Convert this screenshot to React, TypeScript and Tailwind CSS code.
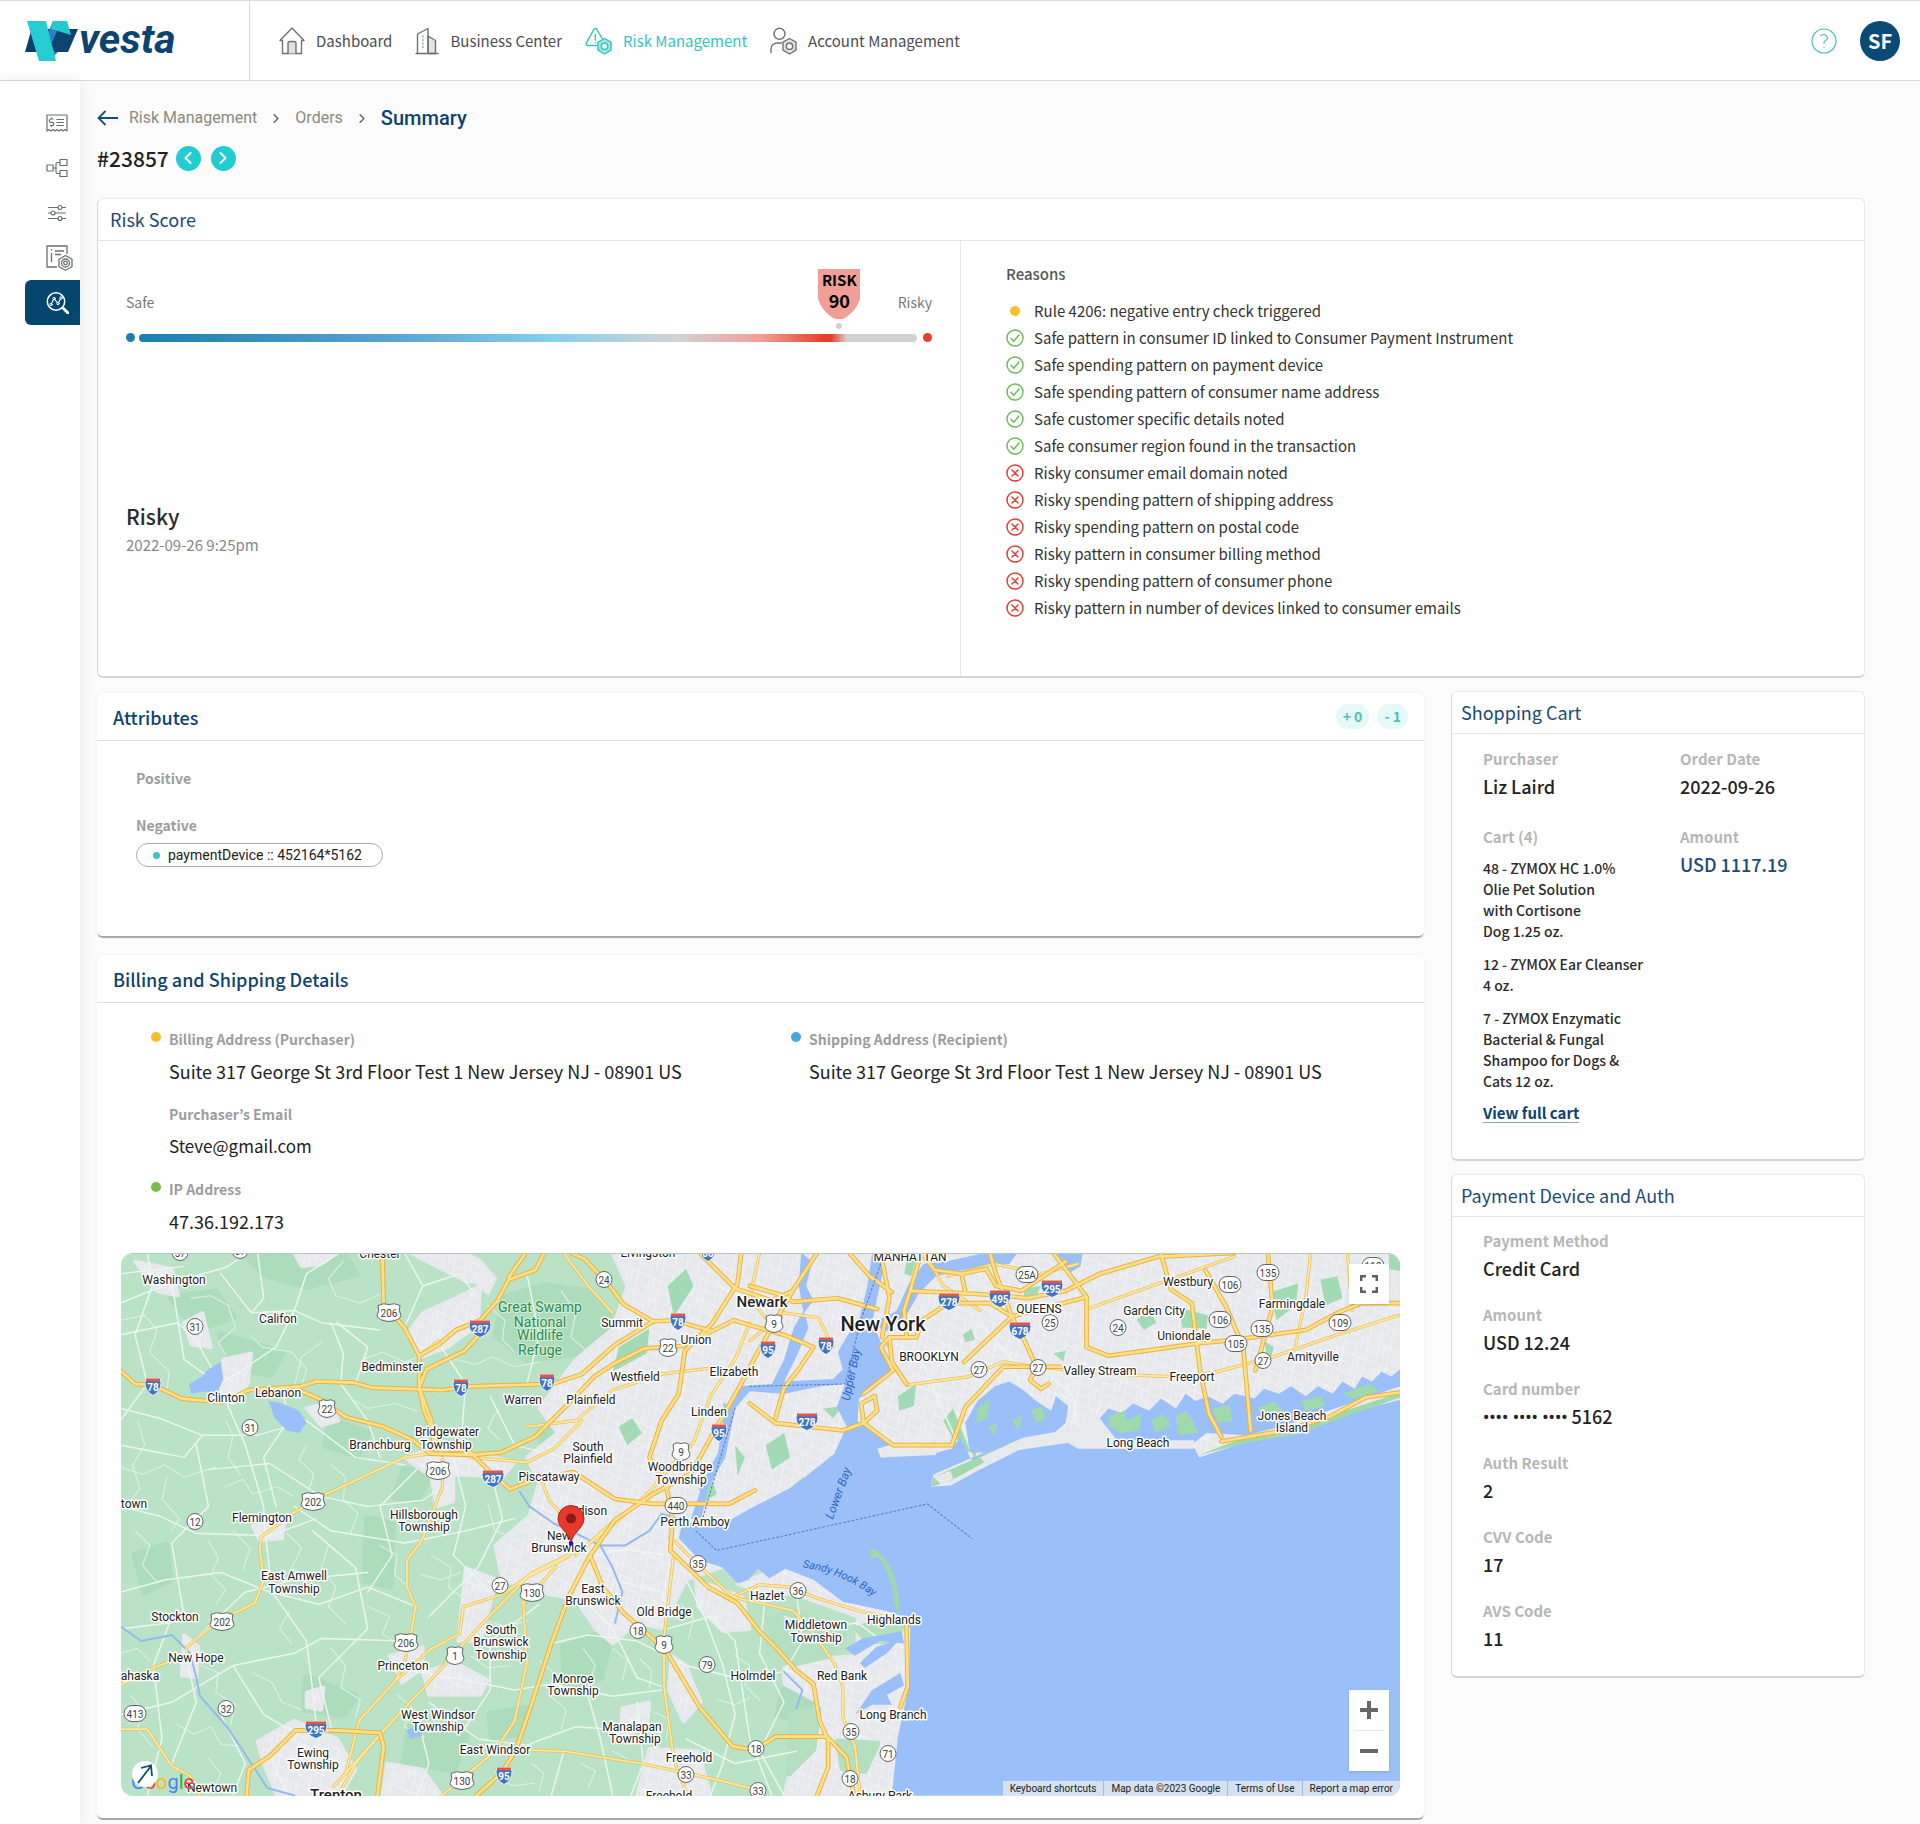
import type { ReactNode } from "react";

/* ---------- icons ---------- */

function VestaMark() {
  return (
    <svg width="54" height="40" viewBox="0 0 54 40" aria-hidden="true">
      <path d="M6 10 L0 31 H12 Z" fill="#0b3f6b" />
      <path d="M22 8 H53 L43 31 H29 L20 16 Z" fill="#0b4470" />
      <path d="M23 12 L28 0 L32 10 L27 22 Z" fill="#2c7fd0" />
      <path d="M27 31 L24 40 L33 31 Z" fill="#2c7fd0" />
      <path d="M28 0 H42 L46 14 L26 8 Z" fill="#25c9cf" />
      <path d="M2 0 H21 L31 40 H14 Z" fill="#25cdd2" />
    </svg>
  );
}

function HomeIcon() {
  return (
    <svg width="26" height="28" viewBox="0 0 26 28" fill="none" stroke="#6f7275" strokeWidth="1.4" strokeLinejoin="round" strokeLinecap="round" aria-hidden="true">
      <path d="M1 13.5 13 1 25 13.5H22.5V26.5H3.5V13.5Z" />
      <path d="M9 26.5V16.5a2 2 0 0 1 2-2h4a2 2 0 0 1 2 2v10" fill="#dfe0e4" />
    </svg>
  );
}

function BuildingIcon() {
  return (
    <svg width="24" height="28" viewBox="0 0 24 28" fill="none" stroke="#6f7275" strokeWidth="1.4" strokeLinejoin="round" strokeLinecap="round" aria-hidden="true">
      <path d="M13 9 20.5 13.5V26.5H13Z" fill="#e3e4e8" />
      <path d="M2.5 26.5V7L13 1.5V26.5" />
      <path d="M1 26.5H23" />
      <path d="M8 9v14" strokeDasharray="1 2.5" stroke="#9da0a3" />
    </svg>
  );
}

function RiskIcon() {
  return (
    <svg width="27" height="28" viewBox="0 0 27 28" fill="none" stroke="#2fc6c3" strokeWidth="1.4" strokeLinejoin="round" strokeLinecap="round" aria-hidden="true">
      <path d="M12 18.5H2.5A1.5 1.5 0 0 1 1.2 16.4L9 2.2a1.5 1.5 0 0 1 2.6 0L17.5 12" />
      <path d="M10.3 7.5v5.5M10.3 15.5v.2" />
      <path d="M19.5 11.5 26 15.2v8L19.5 27 13 23.2v-8Z" fill="#a5e5e3" />
      <circle cx="19.5" cy="19.2" r="3.2" fill="#e6faf9" />
    </svg>
  );
}

function AccountIcon() {
  return (
    <svg width="27" height="28" viewBox="0 0 27 28" fill="none" stroke="#6f7275" strokeWidth="1.4" strokeLinejoin="round" strokeLinecap="round" aria-hidden="true">
      <circle cx="9.5" cy="6.8" r="5.5" />
      <path d="M1 25.5V22a6 6 0 0 1 6-6h4.5" />
      <path d="M19.5 11.5 26 15.2v8L19.5 27 13 23.2v-8Z" fill="#e3e4e8" />
      <circle cx="19.5" cy="19.2" r="3.2" fill="#fff" />
    </svg>
  );
}

function ReceiptIcon() {
  return (
    <svg width="22" height="20" viewBox="0 0 22 20" fill="none" stroke="#6b6e71" strokeWidth="1.2" strokeLinejoin="round" aria-hidden="true">
      <path d="M1 18V2H21V18l-2-1.5-2 1.5-2-1.5-2 1.5-2-1.5-2 1.5-2-1.5-2 1.5-2-1.5Z" />
      <path d="M7.5 6H5a1.4 1.4 0 0 0 0 3.3h1.2a1.4 1.4 0 0 1 0 3.2H3.8M5.6 4.5V6M5.6 12.5V14M10.5 6.5H18M10.5 9.5H18M10.5 12.5H18" />
    </svg>
  );
}

function FlowIcon() {
  return (
    <svg width="22" height="20" viewBox="0 0 22 20" fill="none" stroke="#6b6e71" strokeWidth="1.2" strokeLinejoin="round" aria-hidden="true">
      <rect x="1" y="7" width="6" height="6" />
      <rect x="14" y="1.5" width="7" height="6" />
      <rect x="14" y="12.5" width="7" height="6" />
      <path d="M7 10h3M14 4.5h-2.5a1.5 1.5 0 0 0-1.5 1.5v8a1.5 1.5 0 0 0 1.5 1.5H14" />
    </svg>
  );
}

function SlidersIcon() {
  return (
    <svg width="22" height="18" viewBox="0 0 22 18" fill="none" stroke="#6b6e71" strokeWidth="1.2" aria-hidden="true">
      <path d="M2 3.5h10M16 3.5h4M2 9h3M9 9h11M2 14.5h10M16 14.5h4" />
      <circle cx="14" cy="3.5" r="2" />
      <circle cx="7" cy="9" r="2" />
      <circle cx="14" cy="14.5" r="2" />
    </svg>
  );
}

function ReportIcon() {
  return (
    <svg width="27" height="26" viewBox="0 0 27 26" fill="none" stroke="#6b6e71" strokeWidth="1.3" strokeLinejoin="round" aria-hidden="true">
      <path d="M11 22H1V1H21V9" />
      <path d="M5.5 4v1.5M5.5 8v9M9 6h9M9 9.5h6" />
      <path d="M19.5 10.5 26 14.2v7.5L19.5 25.3 13 21.7v-7.5Z" fill="#fff" />
      <circle cx="19.5" cy="18" r="4" />
      <circle cx="19.5" cy="18" r="1.8" />
    </svg>
  );
}

function AnalyzeIcon() {
  return (
    <svg width="23" height="22" viewBox="0 0 23 22" fill="none" stroke="#fff" strokeWidth="1.5" strokeLinecap="round" aria-hidden="true">
      <circle cx="10" cy="9.5" r="8.7" />
      <path d="m17 16 5 5" strokeWidth="2.8" />
      <path d="m5 12.5 3-6 4 5L15 6" strokeWidth="1.2" />
      <circle cx="5" cy="12.5" r="1.2" fill="#05466f" strokeWidth="1" />
      <circle cx="8" cy="6.5" r="1.2" fill="#05466f" strokeWidth="1" />
      <circle cx="12" cy="11.5" r="1.2" fill="#05466f" strokeWidth="1" />
      <circle cx="15" cy="6" r="1.2" fill="#05466f" strokeWidth="1" />
    </svg>
  );
}

function Chevron({ dir, className }: { dir: "left" | "right"; className: string }) {
  return (
    <svg viewBox="0 0 8 12" className={className} fill="none" stroke="currentColor" strokeWidth="2" strokeLinecap="round" strokeLinejoin="round" aria-hidden="true">
      <path d={dir === "left" ? "M6.5 1 1.5 6l5 5" : "M1.5 1l5 5-5 5"} />
    </svg>
  );
}

function SafeIcon() {
  return (
    <svg width="18" height="18" viewBox="0 0 18 18" fill="none" stroke="#6cb955" strokeWidth="1.4" strokeLinecap="round" strokeLinejoin="round" aria-hidden="true">
      <circle cx="9" cy="9" r="8" />
      <path d="m5 9.3 2.8 3L13 6" />
    </svg>
  );
}

function RiskyIcon() {
  return (
    <svg width="18" height="18" viewBox="0 0 18 18" fill="none" stroke="#df4035" strokeWidth="1.5" strokeLinecap="round" aria-hidden="true">
      <circle cx="9" cy="9" r="8" />
      <path d="m6 6 6 6M12 6l-6 6" />
    </svg>
  );
}

/* ---------- shared pieces ---------- */

function Card({ title, children, inset = "px-[9px]" }: { title: string; children: ReactNode; inset?: string }) {
  return (
    <section className="rounded-md border border-b-2 border-[#e9e9e9] border-b-[#d4d4d4] border-l-[#d9d9d9] bg-white">
      <h2 className={`h-[42px] border-b border-[#e4e6e7] text-[18px] leading-[41px] text-[#1b4a75] ${inset}`}>{title}</h2>
      {children}
    </section>
  );
}

function Panel({ title, extra, children }: { title: string; extra?: ReactNode; children: ReactNode }) {
  return (
    <section className="rounded-md border-b-2 border-[#a9a9ab] bg-white shadow-[0_0_3px_rgba(0,0,0,0.05)]">
      <div className="flex h-12 items-center justify-between border-b border-[#dcdddf] px-4">
        <h2 className="text-[18px] leading-6 font-medium text-[#0b4370]">{title}</h2>
        {extra}
      </div>
      {children}
    </section>
  );
}

function Field({ label, value, tone = "text-[#222]" }: { label: string; value: ReactNode; tone?: string }) {
  return (
    <div>
      <dt className="text-[15px] leading-6 font-bold text-[#b5b7b7]">{label}</dt>
      <dd className={`mt-px h-7 text-[18px] leading-7 font-medium ${tone}`}>{value}</dd>
    </div>
  );
}

function Address({ label, value, dot, size = "text-[18px]" }: { label: string; value: string; dot?: string; size?: string }) {
  return (
    <div className="relative pl-12">
      {dot && <span className={`absolute top-[5px] left-[30px] size-[10px] rounded-full ${dot}`} />}
      <dt className="text-[14px] leading-6 font-bold text-[#9a9d9f]">{label}</dt>
      <dd className={`mt-[6px] leading-7 text-[#222] ${size}`}>{value}</dd>
    </div>
  );
}

/* ---------- map ---------- */

const UNIT = 1.2245;
const mx = (x: number) => Math.round((x - 98.5) * UNIT);
const my = (y: number) => Math.round((y - 1023.5) * UNIT);

const highways = [
  "M98 1119 110 1130 125 1131 148 1142 181 1145 203 1135 245 1132 258 1128 289 1129 303 1133 361 1135 385 1132 451 1130 475 1122 502 1098 533 1079 550 1078 581 1087 599 1078 612 1082 640 1090 664 1100 652 1118 640 1133 633 1158",
  "M246 1136 262 1143 282 1157 313 1165 337 1176 351 1187 386 1188 409 1186 437 1173 464 1146 485 1124 502 1113 526 1101 557 1099 581 1087",
  "M444 1023 437 1037 415 1045 406 1062 392 1078 392 1089 379 1103 348 1118 342 1133 346 1152 354 1171 353 1183 382 1184 399 1201 416 1216 434 1209 468 1202 502 1224 533 1228 595 1228 616 1217",
  "M429 1023 415 1043M392 1078 372 1086 358 1098 342 1107",
  "M312 1026 313 1065 330 1084 342 1107 342 1133 352 1160 356 1184",
  "M389 1466 409 1448 421 1429 433 1394 450 1342 464 1304 481 1271 502 1241 533 1220 564 1203 585 1165 605 1130 619 1103 647 1054 667 1023",
  "M605 1023 602 1048 581 1081 559 1103 554 1138 540 1160 530 1190 544 1214 549 1241 547 1266 578 1296 602 1309 619 1331 633 1345 650 1364 664 1375 669 1405 676 1421 676 1443 667 1466",
  "M676 1419 691 1435 697 1466",
  "M482 1271 492 1296 509 1317 543 1347 571 1394 598 1426 616 1429 633 1418 674 1418",
  "M201 1466 203 1445 220 1434 241 1413 275 1413 310 1415 313 1426 308 1466",
  "M466 1023 477 1028 496 1048 509 1065 533 1079",
  "M612 1146 633 1162 688 1168 705 1162 729 1180 777 1180 788 1149 819 1116 867 1116",
  "M705 1162 703 1146 714 1140 716 1152 705 1162M705 1138 729 1119 719 1100 726 1092 748 1092 753 1078 774 1064 808 1064 826 1075 887 1059",
  "M743 1054 788 1056 819 1058 839 1060 870 1054 898 1040 946 1026 1008 1023",
  "M808 1023 813 1040 826 1075 836 1094 846 1116 841 1127 850 1134 856 1130",
  "M860 1023 887 1059 887 1100 905 1107 942 1102 977 1097 1008 1094 1066 1086 1094 1071 1112 1064 1142 1064",
  "M948 1024 956 1053 973 1064 980 1121 987 1154 997 1173",
  "M984 1037 1001 1067 1015 1100 1021 1168",
  "M1035 1023 1039 1067 1025 1119",
  "M740 1130 728 1112 726 1092M787 1112 805 1095 826 1075",
  "M1142 1137 1115 1141 1085 1157 1049 1168 997 1177",
  "M612 1050 640 1058 647 1063 684 1060 716 1069M694 1024 710 1042 728 1055",
  "M719 1023 726 1060 720 1092M752 1023 743 1054 738 1070 740 1090",
  "M752 1023 763 1037 785 1040 788 1056M785 1040 805 1036 813 1050 834 1054 870 1030",
  "M740 1328 741 1377 735 1394",
  "M572 1024 600 1052 630 1062 647 1054",
];

const routes = [
  "M342 1107 358 1095M361 1190 361 1214 344 1258 332 1274 332 1296 339 1312 336 1331 330 1358 323 1372",
  "M351 1187 330 1190 262 1222 238 1236 213 1255 212 1266 215 1290 208 1309 179 1323 152 1345 152 1352 127 1361 98 1376",
  "M505 1241 479 1262 433 1285 399 1320 371 1350 344 1380 313 1413 272 1459",
  "M505 1241 530 1218 545 1200 566 1178 580 1140 600 1110 612 1080",
  "M550 1268 542 1337 542 1377 550 1437 561 1466",
  "M430 1429 461 1430 523 1440 561 1448 588 1454 619 1462",
  "M454 1279 427 1309 430 1358 420 1405 404 1430 382 1448 361 1466",
  "M464 1271 430 1288 410 1302 378 1312 375 1334 351 1347 323 1372 293 1405 282 1448",
  "M547 1255 571 1279 598 1304 647 1315 661 1330 681 1358 688 1377 688 1402 698 1426 702 1466",
  "M598 1304 620 1294 645 1296 667 1305 700 1315 722 1320 738 1325",
  "M740 1131 791 1124 819 1112 846 1116 905 1122 956 1124 990 1121 1039 1108 1094 1089 1142 1074",
  "M887 1069 946 1048 1008 1026",
  "M1070 1023 1066 1060 1058 1098M1100 1023 1104 1070",
  "M460 1023 480 1050 500 1072M430 1165 470 1160 500 1135 540 1122 580 1117",
  "M384 1190 430 1194 452 1183 475 1160",
  "M98 1412 120 1412 140 1442 155 1450 163 1466M313 1413 290 1440 276 1466",
  "M612 1095 640 1072 668 1076 680 1100M620 1023 612 1060 632 1085",
  "M440 1203 448 1225 462 1240 466 1260M502 1241 470 1270",
  "M755 1023 770 1050 800 1070M774 1042 812 1032 850 1040 880 1032",
];

const locals = [
  "M98 1064 140 1047 184 1035 200 1024M140 1047 150 1110 178 1130 200 1180 215 1230 216 1250 222 1300 250 1340 255 1380 258 1410",
  "M98 1230 130 1238 160 1252 220 1254 258 1240M98 1090 145 1080 160 1095 180 1130",
  "M180 1040 205 1072 240 1070 262 1080 310 1086M240 1070 225 1100 180 1130M240 1070 250 1040 275 1024",
  "M98 1150 130 1158 165 1172 210 1172 250 1160 290 1190 330 1196",
  "M120 1023 124 1050 110 1090 120 1130 98 1160M270 1080 280 1105 278 1130 300 1160 310 1190",
  "M98 1300 135 1290 180 1284 220 1300 260 1310 300 1296 340 1312",
  "M140 1320 125 1360 132 1420 120 1466M150 1345 160 1390 140 1440M152 1345 200 1300 240 1290 300 1284",
  "M98 1400 140 1390 190 1360 240 1350 262 1338 330 1340M190 1360 215 1400 250 1420",
  "M255 1250 290 1280 300 1330 260 1370 270 1410M240 1230 270 1250 330 1260 380 1250 420 1240",
  "M370 1190 380 1230 370 1270 400 1300M400 1200 410 1240 390 1280 350 1320",
  "M360 1100 380 1130 376 1180M400 1140 420 1180 460 1190M430 1040 440 1090 430 1130",
  "M340 1365 380 1372 420 1380 450 1375 500 1385 540 1380M350 1390 390 1420 430 1425 470 1410 540 1415",
  "M470 1300 500 1330 520 1370 540 1377M450 1342 480 1335 520 1340 560 1360 600 1370 640 1365",
  "M560 1290 575 1320 590 1360 600 1400 590 1440 580 1466M545 1330 580 1320 600 1340 612 1420 630 1466",
  "M480 1385 490 1420 500 1466M460 1430 450 1466M520 1390 525 1440 515 1466M560 1420 600 1440 650 1430",
  "M625 1300 620 1350 640 1390 620 1430 640 1466M640 1320 670 1330 700 1325 720 1340M650 1300 655 1340 640 1365",
  "M210 1023 215 1060 205 1072M330 1023 345 1050 330 1084M345 1050 375 1040 390 1060",
  "M160 1180 170 1230 140 1260 150 1320M170 1200 220 1195 262 1222M290 1130 300 1100 275 1080",
  "M98 1040 150 1034M98 1180 150 1190 165 1172M230 1132 235 1160 215 1190 225 1230",
  "M340 1200 310 1230 320 1270 300 1300M262 1222 300 1230 345 1225 361 1214",
  "M98 1330 140 1325M180 1400 200 1440 190 1466M220 1434 235 1466M340 1400 350 1440 340 1466",
  "M440 1310 400 1340 400 1380 380 1410M480 1271 510 1265 545 1270M500 1290 540 1300 547 1320",
  "M832 1176 838 1150 826 1110 800 1080M880 1170 876 1140 850 1116M788 1192 760 1130 750 1105",
];

const lanes = [
  "M98 1078 118 1074 128 1086 122 1104 138 1120 136 1134M156 1060 172 1058 186 1066 192 1084 178 1096 184 1106M204 1090 214 1100 238 1104 250 1118 246 1132",
  "M280 1030 268 1044 274 1058 294 1064 312 1056M262 1096 246 1108 240 1132M296 1110 312 1104 330 1112 342 1108M290 1144 300 1150 322 1146 340 1152",
  "M98 1198 116 1204 134 1196 150 1206 176 1198M112 1160 118 1180 108 1196 114 1216 104 1228M136 1206 132 1224 146 1240 140 1250",
  "M184 1214 198 1208 206 1220 226 1214 240 1222M184 1160 190 1172 186 1190 196 1204M250 1180 244 1192 256 1204 252 1216M270 1196 282 1206 280 1224 292 1236 286 1252",
  "M110 1250 122 1262 116 1278 128 1292M170 1258 178 1272 172 1286 184 1298 176 1310M190 1250 204 1264 198 1282M234 1252 246 1264 238 1280 250 1290",
  "M268 1262 262 1280 274 1296 268 1312 282 1326M310 1262 324 1270 322 1286 334 1296M300 1312 318 1320 312 1334 330 1346M236 1316 228 1330 238 1342",
  "M98 1350 112 1346 122 1356M164 1360 178 1366 176 1382 192 1392 188 1408M206 1366 222 1374 230 1390 246 1396M270 1346 282 1360 278 1378 294 1388 290 1402",
  "M106 1384 116 1396 112 1412 124 1426M144 1408 158 1416 172 1410 180 1424 196 1426M170 1436 180 1448 174 1462M324 1384 336 1394 330 1410 346 1418",
  "M398 1228 404 1250 422 1256 440 1250M352 1270 368 1280 366 1296 380 1306M344 1286 360 1290 376 1284M406 1152 398 1166 408 1176",
  "M372 1110 388 1114 402 1108 420 1116 440 1112M398 1066 412 1078 410 1094 420 1104M458 1054 470 1072 466 1092 480 1104",
  "M394 1322 412 1328 430 1324M384 1352 398 1362 416 1360M440 1356 452 1366 448 1384 462 1396 458 1412M476 1346 486 1360 480 1376",
  "M500 1346 512 1356 508 1372M522 1354 532 1364 530 1378M556 1310 566 1322 562 1338M600 1352 612 1360 608 1376 620 1388M586 1388 600 1392 612 1386",
  "M434 1440 444 1448 440 1462M474 1440 486 1446 480 1460M400 1452 420 1458 436 1456M500 1430 512 1436M534 1398 546 1404 544 1420",
];

const parks = [
  "M444 1050 480 1055 500 1080 470 1105 430 1110 405 1090 412 1060Z",
  "M200 1023 280 1023 290 1040 250 1050 215 1040Z",
  "M300 1240 320 1245 318 1295 298 1290Z",
  "M330 1200 350 1205 340 1225 322 1222Z",
  "M335 1410 380 1418 370 1445 330 1438Z",
  "M460 1345 500 1330 490 1370 462 1380Z",
  "M140 1060 175 1055 190 1075 160 1085Z",
  "M180 1090 230 1105 220 1122 190 1115Z",
  "M110 1270 135 1262 138 1290 118 1300Z",
  "M440 1170 460 1160 470 1180 450 1192Z",
  "M270 1160 300 1170 292 1188 266 1180Z",
  "M400 1400 430 1395 424 1415 402 1418Z",
  "M640 1380 665 1385 660 1405 635 1400Z",
  "M250 1370 290 1385 280 1400 248 1395Z",
];

const cityParks = [
  "M505 1165 516 1158 524 1170 512 1180Z", "M545 1050 560 1036 566 1050 550 1075Z", "M505 1100 530 1085 528 1105 500 1120Z",
  "M963 1068 986 1074 985 1085 965 1084Z", "M1038 1055 1060 1048 1058 1066 1042 1078Z", "M1078 1045 1092 1042 1096 1060 1082 1066Z",
  "M733 1140 748 1130 746 1148 734 1152Z", "M770 1160 778 1150 792 1185 785 1188Z", "M625 1180 640 1170 645 1190 630 1200Z",
  "M641 1218 656 1206 652 1220 640 1230Z", "M786 1090 793 1085 796 1094 788 1096Z", "M790 1178 796 1160 797 1195Z",
  "M1032 1095 1040 1100 1036 1115Z", "M590 1145 598 1150 592 1160Z", "M836 1052 850 1050 846 1058 836 1060Z",
  "M740 1030 748 1028 744 1042 738 1040Z", "M928 1078 938 1068 944 1080 934 1086Z", "M1134 1023 1143 1023 1143 1038 1134 1036Z",
  "M722 1094 728 1090 726 1104Z", "M672 1150 688 1148 680 1158Z", "M860 1105 870 1103 868 1112Z", "M455 1235 468 1240 460 1255Z",
  "M570 1215 580 1205 585 1220 575 1226Z", "M600 1180 608 1190 602 1205Z",
];

const urban = [
  "M500 1023 H1143 V1140 L1090 1200 700 1240 560 1290 540 1330 520 1325 500 1342 486 1330 470 1306 440 1300 410 1290 404 1262 432 1238 440 1210 430 1190 455 1170 440 1150 470 1110 500 1085 512 1050 Z",
  "M345 1072 372 1060 392 1050 390 1082 365 1100 344 1108 332 1090 Z",
  "M362 1023 382 1040 398 1056 404 1044 392 1030 380 1023Z",
  "M150 1080 165 1072 172 1100 156 1098 Z",
  "M182 1110 205 1105 202 1130 190 1146 180 1138 Z",
  "M330 1190 350 1184 395 1188 420 1194 410 1206 370 1204 370 1226 356 1230 352 1206 Z",
  "M380 1280 405 1290 392 1340 374 1340 Z",
  "M210 1422 240 1405 275 1420 290 1445 278 1466 226 1466 215 1440 Z",
  "M316 1440 345 1445 360 1466 312 1466 Z",
  "M345 1365 372 1358 398 1372 392 1384 350 1384 Z",
  "M568 1290 606 1304 612 1330 590 1332 570 1312Z",
  "M602 1293 640 1280 745 1318 745 1466 640 1466 652 1420 668 1390 640 1375 640 1362 660 1355 700 1352 700 1320 650 1302 620 1300Z",
  "M548 1352 560 1360 572 1390 558 1406 546 1380Z",
  "M508 1395 530 1390 528 1412 506 1416Z",
  "M530 1428 570 1430 580 1466 520 1466Z",
  "M318 1352 345 1345 345 1362 328 1374Z",
  "M250 1382 264 1378 262 1396 250 1394Z",
  "M150 1335 162 1345 160 1370 148 1368Z",
  "M250 1150 270 1145 276 1160 262 1164Z",
  "M240 1023 275 1023 262 1032 246 1034Z",
  "M335 1023 375 1023 400 1048 380 1046 360 1036Z",
  "M206 1246 232 1243 230 1256 212 1258Z",
  "M110 1030 140 1036 145 1058 128 1054Z",
];

const shoreGreens = [
  "M628 1322 650 1316 672 1326 690 1332 676 1352 650 1358 634 1344Z",
  "M700 1330 722 1322 736 1328 730 1340 708 1340Z",
  "M684 1422 716 1424 706 1446 688 1444Z",
  "M646 1400 668 1396 664 1428 644 1448Z",
];

const waters = [
  "M1143 1143 1112 1151 1060 1170 1018 1177 979 1190 975 1182 880 1182 872 1178 832 1184 800 1200 776 1213 760 1214 762 1204 794 1190 832 1174 795 1196 784 1174 777 1183 765 1186 719 1190 716 1183 729 1179 706 1163 698 1160 691 1165 681 1187 647 1214 612 1232 591 1244 572 1240 556 1247 554 1256 571 1274 590 1280 602 1293 611 1290 619 1281 628 1289 641 1281 664 1290 688 1308 722 1315 738 1320 743 1330 742 1377 733 1418 728 1466 H1143Z",
  "M792 1186 788 1162 798 1144 812 1132 824 1128 834 1134 846 1144 858 1152 862 1140 872 1148 870 1162 858 1172 832 1176 810 1186Z",
  "M1143 1118 1136 1124 1128 1120 1120 1128 1112 1124 1106 1134 1096 1128 1088 1138 1076 1132 1066 1140 1054 1132 1044 1138 1032 1134 1024 1142 1008 1138 998 1146 986 1140 976 1144 968 1138 960 1150 948 1142 938 1152 925 1146 916 1154 905 1150 896 1160 912 1178 975 1178 985 1170 1018 1172 1049 1164 1090 1150 1143 1132Z",
  "M712 1023 H724 L716 1060 712 1080 720 1098 728 1119 714 1134 701 1142 700 1162 692 1166 683 1149 690 1130 670 1132 640 1138 612 1136 600 1150 592 1190 578 1215 572 1242 564 1240 574 1210 586 1186 592 1148 604 1132 630 1130 640 1110 648 1084 656 1070 660 1084 650 1108 640 1128 680 1126 688 1118 684 1104 692 1090 702 1075 708 1050Z",
  "M714 1080 732 1070 742 1048 754 1032 772 1030 800 1024 H830 L824 1032 805 1034 780 1038 764 1042 750 1056 740 1074 722 1088Z",
  "M862 1023 H884 L882 1034 872 1040 864 1032Z",
  "M654 1023 663 1030 658 1050 664 1062 656 1072 652 1050Z",
  "M154 1130 165 1124 170 1118 180 1112 182 1126 176 1140 168 1136 156 1138Z",
  "M219 1144 230 1146 244 1152 250 1162 244 1170 234 1168 224 1158Z",
  "M702 1358 715 1345 735 1338 724 1350 706 1362 Z",
  "M698 1400 712 1380 735 1366 738 1376 724 1384 728 1392 712 1392Z",
  "M690 1346 704 1338 736 1332 738 1342 718 1340 698 1352Z",
  "M332 1412 346 1408 344 1418 334 1420Z",
];

const streams = [
  "M98 1328 115 1340 140 1335 155 1350 160 1370 163 1385 185 1410 205 1440 218 1460 240 1466",
  "M424 1218 432 1230 452 1244 466 1250 490 1262 510 1262 530 1250 540 1236 560 1242",
  "M490 1262 500 1280 508 1300 502 1325M640 1365 655 1380 650 1395",
];

const labels: [string, number, number][] = [
  ["Washington", 142, 1048], ["Califon", 227, 1080], ["Bedminster", 320, 1119], ["Summit", 508, 1083],
  ["Union", 568, 1097], ["Elizabeth", 599, 1123], ["Westfield", 518, 1127], ["Warren", 427, 1146],
  ["Plainfield", 482, 1146], ["Linden", 579, 1156], ["Clinton", 184, 1144], ["Lebanon", 227, 1140],
  ["Bridgewater", 365, 1172], ["Township", 364, 1183], ["Branchburg", 310, 1183], ["South", 480, 1184],
  ["Plainfield", 480, 1194], ["Woodbridge", 555, 1201], ["Township", 556, 1211], ["Piscataway", 448, 1209],
  ["Edison", 481, 1237], ["Perth Amboy", 567, 1246], ["New", 456, 1257], ["Brunswick", 456, 1267],
  ["Hillsborough", 346, 1240], ["Township", 346, 1250], ["Flemington", 214, 1242], ["town", 109, 1231],
  ["East Amwell", 240, 1290], ["Township", 240, 1300], ["Stockton", 143, 1323], ["New Hope", 160, 1357],
  ["ahaska", 114, 1371], ["Princeton", 329, 1363], ["South", 409, 1334], ["Brunswick", 409, 1344],
  ["Township", 409, 1354], ["East", 484, 1300], ["Brunswick", 484, 1310], ["Old Bridge", 542, 1319],
  ["Monroe", 468, 1374], ["Township", 468, 1384], ["West Windsor", 357, 1403], ["Township", 357, 1413],
  ["East Windsor", 404, 1432], ["Manalapan", 516, 1413], ["Township", 518, 1423], ["Freehold", 562, 1438],
  ["Ewing", 255, 1434], ["Township", 255, 1444], ["Newtown", 173, 1463], ["Holmdel", 615, 1371],
  ["Hazlet", 626, 1306], ["Middletown", 666, 1330], ["Township", 666, 1340], ["Highlands", 730, 1326],
  ["Red Bank", 687, 1371], ["Long Branch", 729, 1403], ["Westbury", 970, 1050], ["Garden City", 942, 1073],
  ["Farmingdale", 1055, 1068], ["Uniondale", 967, 1094], ["Amityville", 1072, 1111], ["Freeport", 973, 1127],
  ["Valley Stream", 898, 1122], ["Long Beach", 929, 1181], ["Jones Beach", 1055, 1159], ["Island", 1055, 1169],
  ["Chester", 310, 1027], ["Livingston", 529, 1026], ["Freehold", 546, 1469], ["Asbury Park", 718, 1469],
];

const shields: ["i" | "u" | "s", string, number, number][] = [
  ["i", "78", 125, 1132], ["i", "287", 392, 1085], ["i", "78", 376, 1133], ["i", "78", 446, 1129], ["i", "78", 553, 1079],
  ["i", "287", 402, 1207], ["i", "95", 587, 1170], ["i", "95", 627, 1102], ["i", "78", 674, 1099], ["i", "278", 775, 1063],
  ["i", "495", 816, 1060], ["i", "295", 859, 1052], ["i", "678", 833, 1086], ["i", "278", 659, 1161], ["i", "295", 258, 1412],
  ["i", "95", 411, 1450], ["i", "80", 578, 1023],
  ["u", "206", 317, 1072], ["u", "22", 545, 1100], ["u", "22", 267, 1150], ["u", "206", 357, 1201], ["u", "202", 255, 1226],
  ["u", "9", 556, 1185], ["u", "9", 632, 1081], ["u", "130", 434, 1300], ["u", "202", 181, 1324], ["u", "206", 331, 1341],
  ["u", "1", 371, 1352], ["u", "9", 542, 1343], ["u", "130", 377, 1454],
  ["s", "31", 159, 1083], ["s", "24", 493, 1045], ["s", "31", 204, 1166], ["s", "12", 159, 1242], ["s", "440", 552, 1229],
  ["s", "27", 408, 1295], ["s", "35", 570, 1277], ["s", "18", 521, 1331], ["s", "79", 577, 1359], ["s", "413", 110, 1399],
  ["s", "32", 184, 1395], ["s", "18", 617, 1428], ["s", "33", 560, 1449], ["s", "33", 619, 1462], ["s", "36", 651, 1299],
  ["s", "35", 695, 1414], ["s", "71", 725, 1432], ["s", "18", 694, 1452], ["s", "25A", 838, 1041], ["s", "25", 857, 1080],
  ["s", "24", 913, 1084], ["s", "27", 799, 1118], ["s", "27", 847, 1117], ["s", "106", 1004, 1049], ["s", "135", 1035, 1039],
  ["s", "106", 996, 1077], ["s", "135", 1030, 1085], ["s", "105", 1009, 1097], ["s", "27", 1031, 1111], ["s", "109", 1094, 1080],
  ["s", "57", 147, 1023], ["s", "57", 196, 1021], ["s", "110", 1121, 1033],
];

function Shield({ kind, text, x, y }: { kind: "i" | "u" | "s"; text: string; x: number; y: number }) {
  const w = text.length > 2 ? 11 : 8;
  return (
    <g transform={`translate(${mx(x)} ${my(y)})`}>
      {kind === "i" && (
        <>
          <path d={`M${-w + 1} -8H${w - 1}L${w} -4Q${w} 5 0 9Q${-w} 5 ${-w} -4Z`} fill="#3f74c4" stroke="#fff" strokeWidth="0.8" />
          <path d={`M${-w + 1} -8H${w - 1}V-5H${-w + 1}Z`} fill="#d8594f" />
        </>
      )}
      {kind === "u" && (
        <path d={`M${-w} -7Q${-w / 2} -10 0 -8Q${w / 2} -10 ${w} -7Q${w - 2} -2 ${w + 1} 3Q${w} 8 0 9Q${-w} 8 ${-w - 1} 3Q${-w + 2} -2 ${-w} -7Z`} fill="#fff" stroke="#5f6368" />
      )}
      {kind === "s" && <rect x={-w} y="-8" width={w * 2} height="16" rx="8" fill="#fff" stroke="#5f6368" />}
      <text y="4" textAnchor="middle" fontSize="10" fontWeight={kind === "i" ? 700 : 400} fill={kind === "i" ? "#fff" : "#3c4043"}>
        {text}
      </text>
    </g>
  );
}

function AreaMap() {
  return (
    <svg viewBox="0 0 1279 543" preserveAspectRatio="xMidYMid slice" className="block h-[542px] w-full font-[Roboto,sans-serif]" role="img" aria-label="Map of New Jersey and New York">
      <defs>
        <pattern id="streets" width="19" height="16" patternUnits="userSpaceOnUse" patternTransform="rotate(24) skewX(12)">
          <rect width="19" height="16" fill="#e7e9ed" />
          <path d="M0 1H19M0 9H11M1 0V16M11 4V16M15 0V9" stroke="#f3f4f7" strokeWidth="0.8" />
        </pattern>
        <path id="sandyHook" d="M655 1280Q690 1284 724 1312" />
      </defs>
      <g transform="scale(1.2245) translate(-98.5 -1023.5)">
        <rect x="98" y="1023" width="1046" height="444" fill="#b9e2c6" />
        {parks.map((d) => <path key={d} d={d} fill="#a4d9b4" stroke="#a4d9b4" strokeWidth="6" strokeLinejoin="round" opacity="0.6" />)}
        {urban.map((d) => <path key={d} d={d} fill="url(#streets)" strokeLinejoin="round" stroke="#e7e9ed" strokeWidth="3" />)}
        {cityParks.map((d) => <path key={d} d={d} fill="#a1dab4" />)}
        {shoreGreens.map((d) => <path key={d} d={d} fill="#b4dfc0" stroke="#b4dfc0" strokeWidth="5" strokeLinejoin="round" />)}
        <g fill="none" strokeLinejoin="round" strokeLinecap="round">
          {lanes.map((d) => <path key={d} d={d} stroke="#daf0e0" strokeWidth="1" />)}
          {locals.map((d) => <path key={d} d={d} stroke="#ebf7ee" strokeWidth="1.2" />)}
          {streams.map((d) => <path key={d} d={d} stroke="#93b9ee" strokeWidth="1.6" />)}
        </g>
        {waters.map((d) => <path key={d} d={d} fill="#9bbff9" />)}
        <g fill="#9fd9ad">
          <path d="M711 1264Q722 1268 729 1284Q735 1300 734 1318L730 1310Q730 1296 724 1284L718 1272 710 1272Z" />
          <path d="M905 1156 918 1152 920 1160 932 1154 930 1168 914 1170 905 1164ZM940 1160 950 1154 956 1164 944 1170ZM960 1156 968 1152 974 1160 978 1170 962 1172ZM990 1150 1004 1147 1006 1160 994 1162ZM1026 1150 1040 1144 1048 1152 1034 1158ZM1062 1144 1078 1140 1082 1148 1066 1152ZM1096 1138 1118 1130 1126 1136 1104 1142ZM842 1152 850 1148 854 1158 846 1162ZM798 1150 808 1142 806 1158 797 1162ZM826 1160 834 1156 832 1168ZM806 1166 814 1162 812 1172Z" />
          <path d="M979 1188 1018 1173 1060 1164 1110 1148 1143 1137 1143 1141 1112 1152 1060 1171 1018 1178ZM762 1206 794 1192 832 1175 835 1178 800 1196 776 1209 760 1214Z" />
        </g>
        <path d="M835 1174 880 1166 896 1156 912 1176 975 1176 975 1183 880 1183 872 1178 832 1182 804 1194 800 1190ZM762 1206 776 1201 778 1208 768 1212ZM718 1183 765 1184 764 1188 720 1190Z" fill="#e7e9ed" />
        <g fill="none" strokeLinejoin="round" strokeLinecap="round">
          {routes.map((d) => <path key={d} d={d} stroke="#eebf54" strokeWidth="2.6" />)}
          {routes.map((d) => <path key={d} d={d} stroke="#fdeaa4" strokeWidth="1.4" />)}
          {highways.map((d) => <path key={d} d={d} stroke="#edb13a" strokeWidth="3.8" />)}
          {highways.map((d) => <path key={d} d={d} stroke="#fbe08c" strokeWidth="2.2" />)}
          <path d="M568 1250 585 1266 640 1254 757 1228 793 1256M612 1132 690 1130 702 1080 722 1023M600 1150 588 1190 572 1245" stroke="#5c7fc4" strokeWidth="0.9" strokeDasharray="1.5 2" />
        </g>
        <text fontSize="9" fill="#2a67c8" fontStyle="italic">
          <textPath href="#sandyHook">Sandy Hook Bay</textPath>
        </text>
      </g>
      {shields.map(([kind, text, x, y]) => <Shield key={`${text}-${x}`} kind={kind} text={text} x={x} y={y} />)}
      <g textAnchor="middle" fontSize="12" fill="#202124" stroke="#fff" strokeWidth="3" strokeLinejoin="round" className="[paint-order:stroke]">
        {labels.map(([text, x, y]) => <text key={`${text}-${x}-${y}`} x={mx(x)} y={my(y)}>{text}</text>)}
        <text x={mx(622)} y={my(1067)} fontSize="15" fontWeight="500">Newark</text>
        <text x={mx(721)} y={my(1086)} fontSize="20" fontWeight="500">New York</text>
        <text x={mx(274)} y={my(1469)} fontSize="15" fontWeight="500">Trenton</text>
        <text x={mx(848)} y={my(1072)} fontSize="12">QUEENS</text>
        <text x={mx(758)} y={my(1111)} fontSize="12">BROOKLYN</text>
        <text x={mx(743)} y={my(1029)} fontSize="12">MANHATTAN</text>
      </g>
      <g textAnchor="middle" fontSize="14" fill="#2c8a50" stroke="#d5efdc" strokeWidth="2" className="[paint-order:stroke]">
        <text x={mx(441)} y={my(1071)}>Great Swamp</text>
        <text x={mx(441)} y={my(1083)}>National</text>
        <text x={mx(441)} y={my(1094)}>Wildlife</text>
        <text x={mx(441)} y={my(1106)}>Refuge</text>
      </g>
      <g textAnchor="middle" fontSize="12" fill="#2a67c8" fontStyle="italic">
        <text transform={`translate(${mx(698)} ${my(1123)}) rotate(-78)`}>Upper Bay</text>
        <text transform={`translate(${mx(687)} ${my(1220)}) rotate(-70)`}>Lower Bay</text>
      </g>
      <g transform={`translate(${mx(466)} ${my(1260)})`}>
        <path d="M0 0C-1 -11 -13 -15 -13 -25A13 13 0 0 1 13 -25C13 -15 1 -11 0 0Z" fill="#e8382c" stroke="#b7221b" />
        <circle cy="-25" r="5" fill="#8c1a14" />
        <rect x="-2" y="-2" width="4" height="4" fill="#1414d8" />
      </g>
    </svg>
  );
}

const attributions = ["Keyboard shortcuts", "Map data ©2023 Google", "Terms of Use", "Report a map error"];

function MapPanel() {
  return (
    <div className="relative mx-6 mt-[18px] mb-[22px] overflow-hidden rounded-xl border-t border-[#b9c4c4]">
      <AreaMap />
      <button aria-label="Toggle fullscreen view" className="absolute top-[10px] right-[11px] grid size-10 place-items-center bg-white shadow">
        <svg width="18" height="18" viewBox="0 0 18 18" fill="none" stroke="#5f6062" strokeWidth="2.5" aria-hidden="true">
          <path d="M1.2 6V1.2H6M12 1.2h4.8V6M16.8 12v4.8H12M6 16.8H1.2V12" />
        </svg>
      </button>
      <div className="absolute right-[11px] bottom-[25px] flex w-10 flex-col items-center bg-white shadow">
        <button aria-label="Zoom in" className="grid size-10 place-items-center">
          <svg width="18" height="18" stroke="#666" strokeWidth="4" aria-hidden="true"><path d="M9 0V18M0 9H18" /></svg>
        </button>
        <span className="h-px w-[30px] bg-[#e6e6e6]" />
        <button aria-label="Zoom out" className="grid size-10 place-items-center">
          <svg width="18" height="18" stroke="#666" strokeWidth="4" aria-hidden="true"><path d="M0 9H18" /></svg>
        </button>
      </div>
      <div className="absolute bottom-0 left-[10px] flex items-end font-[Roboto,sans-serif] text-[20px] leading-7">
        <span className="text-[#4285f4]">G</span>
        <span className="text-[#ea4335]">o</span>
        <span className="text-[#fbbc05]">o</span>
        <span className="text-[#4285f4]">g</span>
        <span className="text-[#34a853]">l</span>
        <span className="text-[#ea4335]">e</span>
      </div>
      <a href="#directions" aria-label="Open directions" className="absolute bottom-[9px] left-[11px] grid size-[26px] place-items-center rounded-full bg-white">
        <svg width="16" height="20" viewBox="0 0 16 20" fill="none" stroke="#134b6e" strokeWidth="1.8" aria-hidden="true">
          <path d="M1 19 14 2M4 4 14 1.5 15 12" />
        </svg>
      </a>
      <div className="absolute right-0 bottom-0 flex h-[15px] divide-x divide-[#a9b8cc] bg-[#d3e1f0] font-[Roboto,sans-serif] text-[10px] leading-[15px] text-[#222]">
        {attributions.map((a) => <a key={a} href="#map" className="px-[7px]">{a}</a>)}
      </div>
    </div>
  );
}

/* ---------- page ---------- */

const nav = [
  { label: "Dashboard", icon: <HomeIcon />, active: false },
  { label: "Business Center", icon: <BuildingIcon />, active: false },
  { label: "Risk Management", icon: <RiskIcon />, active: true },
  { label: "Account Management", icon: <AccountIcon />, active: false },
];

const tools = [
  { label: "Orders", icon: <ReceiptIcon />, active: false },
  { label: "Links", icon: <FlowIcon />, active: false },
  { label: "Settings", icon: <SlidersIcon />, active: false },
  { label: "Reports", icon: <ReportIcon />, active: false },
  { label: "Analysis", icon: <AnalyzeIcon />, active: true },
];

const reasons: ["rule" | "safe" | "risky", string][] = [
  ["rule", "Rule 4206: negative entry check triggered"],
  ["safe", "Safe pattern in consumer ID linked to Consumer Payment Instrument"],
  ["safe", "Safe spending pattern on payment device"],
  ["safe", "Safe spending pattern of consumer name address"],
  ["safe", "Safe customer specific details noted"],
  ["safe", "Safe consumer region found in the transaction"],
  ["risky", "Risky consumer email domain noted"],
  ["risky", "Risky spending pattern of shipping address"],
  ["risky", "Risky spending pattern on postal code"],
  ["risky", "Risky pattern in consumer billing method"],
  ["risky", "Risky spending pattern of consumer phone"],
  ["risky", "Risky pattern in number of devices linked to consumer emails"],
];

const cart = [
  ["48 - ZYMOX HC 1.0%", "Olie Pet Solution", "with Cortisone", "Dog 1.25 oz."],
  ["12 - ZYMOX Ear Cleanser", "4 oz."],
  ["7 - ZYMOX Enzymatic", "Bacterial & Fungal", "Shampoo for Dogs &", "Cats 12 oz."],
];

const payment: [string, ReactNode][] = [
  ["Payment Method", "Credit Card"],
  ["Amount", "USD 12.24"],
  ["Card number", <><span className="font-[Roboto,sans-serif]">•••• •••• ••••</span> 5162</>],
  ["Auth Result", "2"],
  ["CVV Code", "17"],
  ["AVS Code", "11"],
];

function Header() {
  return (
    <header className="flex h-[81px] border-y border-[#d9dadb] bg-white">
      <a href="#home" aria-label="vesta" className="flex w-[250px] shrink-0 items-center border-r border-[#d9dadb] pl-[25px]">
        <VestaMark />
        <span className="-mt-1 font-[Roboto,sans-serif] text-[41px] leading-10 font-bold text-[#0b4470] italic">vesta</span>
      </a>
      <nav className="flex items-center gap-[23px] pl-[29px]">
        {nav.map((n) => (
          <a key={n.label} href="#nav" className={`flex items-center gap-[11px] text-[15px] leading-6 ${n.active ? "text-[#35c5c4]" : "text-[#4b4d50]"}`}>
            {n.icon}
            {n.label}
          </a>
        ))}
      </nav>
      <div className="ml-auto flex items-center gap-[23px] pr-5">
        <button aria-label="Help">
          <svg width="26" height="26" viewBox="0 0 26 26" fill="none" stroke="#4fbdb9" strokeWidth="1.2" strokeLinecap="round" aria-hidden="true">
            <circle cx="13" cy="13" r="12" />
            <path d="M10 7.5Q11 6.5 13 6.5T16.5 9.5Q16.5 11.5 14.5 12.5T13 15.5M13 19v.3" />
          </svg>
        </button>
        <button className="size-10 rounded-full bg-[#0a4a75] text-[20px] font-bold text-white">SF</button>
      </div>
    </header>
  );
}

function RiskScore() {
  return (
    <Card title="Risk Score" inset="px-3">
      <div className="grid grid-cols-[864fr_904fr]">
        <div className="border-r border-[#e6e8e9] px-7 pt-7">
          <div className="relative h-[50px]">
            <div className="flex justify-between pt-[21px] text-[14px] leading-6 text-[#77797c]">
              <span>Safe</span>
              <span>Risky</span>
            </div>
            <div className="absolute top-0 left-[88.5%] flex -translate-x-1/2 flex-col items-center">
              <div className="relative flex h-[50px] w-[42px] flex-col items-center text-black">
                <svg viewBox="0 0 42 50" className="absolute inset-0" aria-hidden="true">
                  <path d="M0 0H42V30Q38 42 27 49 21 52 15 49 4 42 0 30Z" fill="#f09e96" />
                </svg>
                <span className="relative text-[15px] leading-[22px] font-bold">RISK</span>
                <span className="relative text-[18px] leading-[18px] font-bold">90</span>
              </div>
              <span className="mt-1 size-[6px] rounded-full bg-[#d0d0d2]" />
            </div>
          </div>
          <div className="mt-[14px] flex items-center gap-1" role="meter" aria-label="Risk score" aria-valuemin={0} aria-valuemax={100} aria-valuenow={90}>
            <span className="size-[9px] shrink-0 rounded-full bg-[#1a7fb0]" />
            <span className="h-2 flex-1 rounded-full bg-[linear-gradient(90deg,#1a7fad,#5ba3d3_33%,#87cfec_53%,#d3d3d6_69%,#f0a096_80%,#e4412c_88%,#e4412c_89%,#d2d2d4_91%)]" />
            <span className="ml-[2px] size-[9px] shrink-0 rounded-full bg-[#e5402f]" />
          </div>
          <p className="mt-[158px] text-[21px] leading-8 font-medium text-[#2b2b2b]">Risky</p>
          <p className="mt-px text-[15px] leading-6 text-[#85878a]">2022-09-26 9:25pm</p>
        </div>
        <div className="px-[45px] pt-[19px] pb-[55px]">
          <h3 className="text-[15px] leading-7 font-medium text-[#55575a]">Reasons</h3>
          <ul className="mt-[9px]">
            {reasons.map(([kind, text]) => (
              <li key={text} className="flex h-[27px] items-center gap-[10px] text-[15px] leading-6 text-[#333]">
                <span className="grid size-[18px] place-items-center">
                  {kind === "rule" && <span className="size-[10px] rounded-full bg-[#f8c02a]" />}
                  {kind === "safe" && <SafeIcon />}
                  {kind === "risky" && <RiskyIcon />}
                </span>
                {text}
              </li>
            ))}
          </ul>
        </div>
      </div>
    </Card>
  );
}

export default function App() {
  return (
    <div className="flex min-h-screen flex-col bg-[#fbfbfb] font-['Noto_Sans_CJK_KR','Noto_Sans_CJK_SC','Noto_Sans',sans-serif]">
      <Header />
      <div className="flex flex-1">
        <aside className="flex w-20 shrink-0 flex-col bg-white pt-[19px] shadow-[0_0_14px_rgba(0,0,0,0.09)]">
          {tools.map((t) => (
            <a
              key={t.label}
              href="#tool"
              aria-label={t.label}
              className={`ml-[25px] flex h-[45px] items-center rounded-l-md ${t.active ? "bg-[#05466f]" : ""}`}
            >
              <span className="ml-[21px]">{t.icon}</span>
            </a>
          ))}
        </aside>
        <main className="min-w-0 flex-1 pt-[21px] pr-[55px] pb-1 pl-[17px]">
          <nav aria-label="Breadcrumb" className="flex h-8 items-center font-[Roboto,sans-serif] text-[16px] text-[#8a8b7e]">
            <a href="#back" aria-label="Back" className="mr-[11px] text-[#14507c]">
              <svg width="21" height="16" viewBox="0 0 21 16" fill="none" stroke="currentColor" strokeWidth="1.8" aria-hidden="true">
                <path d="M21 8H1.5M8.5 1l-7 7 7 7" />
              </svg>
            </a>
            <a href="#risk">Risk Management</a>
            <Chevron dir="right" className="mx-4 h-[9px] w-[6px] text-[#666]" />
            <a href="#orders">Orders</a>
            <Chevron dir="right" className="mx-4 h-[9px] w-[6px] text-[#666]" />
            <span className="text-[20px] font-medium text-[#0b4370]">Summary</span>
          </nav>
          <div className="mt-2 flex h-8 items-center">
            <h1 className="text-[21px] leading-8 font-medium text-[#222]">#23857</h1>
            <button aria-label="Previous order" className="ml-[7px] grid size-[25px] place-items-center rounded-full bg-[#22cdd2] text-white">
              <Chevron dir="left" className="h-3 w-2" />
            </button>
            <button aria-label="Next order" className="ml-[10px] grid size-[25px] place-items-center rounded-full bg-[#22cdd2] text-white">
              <Chevron dir="right" className="h-3 w-2" />
            </button>
          </div>
          <div className="mt-6">
            <RiskScore />
          </div>
          <div className="mt-[13px] grid grid-cols-[minmax(0,1fr)_414px] items-start gap-[27px]">
            <div className="mt-[2px] flex flex-col gap-[17px]">
              <Panel
                title="Attributes"
                extra={
                  <div className="flex gap-2 text-[14px] leading-[25px] font-bold text-[#4cc1bb]">
                    <span className="rounded-full bg-[#e6f8f7] px-[7px]">+ 0</span>
                    <span className="rounded-full bg-[#e6f8f7] px-[7px]">- 1</span>
                  </div>
                }
              >
                <div className="px-[39px] pt-[25px] pb-[69px]">
                  <h3 className="text-[14px] leading-6 font-bold text-[#9a9d9f]">Positive</h3>
                  <h3 className="mt-[23px] text-[14px] leading-6 font-bold text-[#9a9d9f]">Negative</h3>
                  <span className="mt-[6px] inline-flex h-6 items-center gap-2 rounded-full border border-[#a9abad] pr-5 pl-4 font-[Roboto,sans-serif] text-[14px] text-[#222]">
                    <span className="size-[7px] rounded-full bg-[#3fc1c9]" />
                    paymentDevice :: 452164*5162
                  </span>
                </div>
              </Panel>
              <Panel title="Billing and Shipping Details">
                <dl className="grid grid-cols-[640fr_639fr] gap-y-[17px] px-6 pt-6">
                  <Address label="Billing Address (Purchaser)" value="Suite 317 George St 3rd Floor Test 1 New Jersey NJ - 08901 US" dot="bg-[#f5c02c]" />
                  <Address label="Shipping Address (Recipient)" value="Suite 317 George St 3rd Floor Test 1 New Jersey NJ - 08901 US" dot="bg-[#45a9e0]" />
                  <div className="col-span-2">
                    <Address label="Purchaser’s Email" value="Steve@gmail.com" size="text-[17px]" />
                  </div>
                  <div className="col-span-2">
                    <Address label="IP Address" value="47.36.192.173" dot="bg-[#76bf40]" />
                  </div>
                </dl>
                <MapPanel />
              </Panel>
            </div>
            <div className="flex flex-col gap-[13px]">
              <Card title="Shopping Cart">
                <div className="grid grid-cols-[197px_1fr] pt-[13px] pb-9 pl-[31px]">
                  <dl>
                    <Field label="Purchaser" value="Liz Laird" />
                    <dt className="mt-[25px] text-[15px] leading-6 font-bold text-[#b5b7b7]">Cart (4)</dt>
                    <dd className="mt-[9px] flex flex-col gap-3 text-[14px] leading-[21px] font-medium text-[#2b2b2b]">
                      {cart.map((lines) => (
                        <p key={lines[0]}>
                          {lines.map((l) => <span key={l} className="block whitespace-nowrap">{l}</span>)}
                        </p>
                      ))}
                      <a href="#cart" className="self-start border-b border-[#8ea9bf] text-[15px] leading-[18px] font-bold text-[#0b4370]">View full cart</a>
                    </dd>
                  </dl>
                  <dl className="flex flex-col gap-[25px]">
                    <Field label="Order Date" value="2022-09-26" />
                    <Field label="Amount" value="USD 1117.19" tone="text-[#1b4a75]" />
                  </dl>
                </div>
              </Card>
              <Card title="Payment Device and Auth">
                <dl className="flex flex-col gap-[21px] pt-3 pb-6 pl-[31px]">
                  {payment.map(([label, value]) => <Field key={label} label={label} value={value} />)}
                </dl>
              </Card>
            </div>
          </div>
        </main>
      </div>
    </div>
  );
}
